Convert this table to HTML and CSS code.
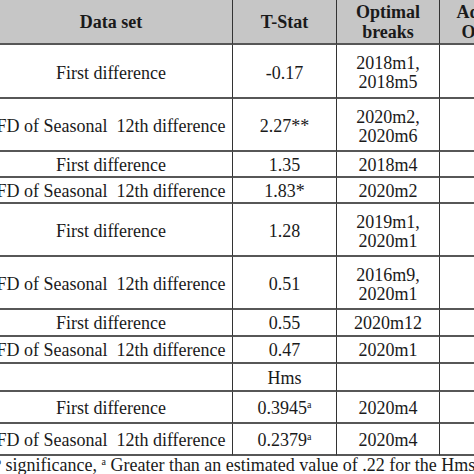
FILE: index.html
```html
<!DOCTYPE html>
<html>
<head>
<meta charset="utf-8">
<link rel="stylesheet" href="styles.css">
</head>
<body>
<div class="page">
  <table class="data">
    <thead>
      <tr class="hd">
        <th class="c1">Data set</th>
        <th class="c2">T-Stat</th>
        <th class="c3">Optimal<br>breaks</th>
        <th class="c4">Additive<br>Outlier</th>
      </tr>
    </thead>
    <tbody>
      <tr class="r54"><td>First difference</td><td>-0.17</td><td>2018m1,<br>2018m5</td><td></td></tr>
      <tr class="r53"><td>FD of Seasonal&nbsp; 12th difference</td><td>2.27**</td><td>2020m2,<br>2020m6</td><td></td></tr>
      <tr class="r26"><td>First difference</td><td>1.35</td><td>2018m4</td><td></td></tr>
      <tr class="r26"><td>FD of Seasonal&nbsp; 12th difference</td><td>1.83*</td><td>2020m2</td><td></td></tr>
      <tr class="r53"><td>First difference</td><td>1.28</td><td>2019m1,<br>2020m1</td><td></td></tr>
      <tr class="r53"><td>FD of Seasonal&nbsp; 12th difference</td><td>0.51</td><td>2016m9,<br>2020m1</td><td></td></tr>
      <tr class="r27"><td>First difference</td><td>0.55</td><td>2020m12</td><td></td></tr>
      <tr class="r27"><td>FD of Seasonal&nbsp; 12th difference</td><td>0.47</td><td>2020m1</td><td></td></tr>
      <tr class="r28"><td></td><td>Hms</td><td></td><td></td></tr>
      <tr class="r32"><td>First difference</td><td>0.3945<sup class="sup">a</sup></td><td>2020m4</td><td></td></tr>
      <tr class="r32"><td>FD of Seasonal&nbsp; 12th difference</td><td>0.2379<sup class="sup">a</sup></td><td>2020m4</td><td></td></tr>
    </tbody>
  </table>
  <p class="note"><sup class="sup">b</sup> significance, <sup class="sup">a</sup> Greater than an estimated value of .22 for the Hms statistic</p>
</div>
</body>
</html>
```
FILE: styles.css
```css
html, body {
  margin: 0;
  padding: 0;
  background: #ffffff;
}
.page {
  width: 474px;
  height: 474px;
  overflow: hidden;
  font-family: "Liberation Serif", "Times New Roman", serif;
  font-size: 18px;
  color: #1a1a1a;
}
.data {
  border-collapse: separate;
  border-spacing: 0;
  table-layout: fixed;
  width: 550px;
  margin-left: -10px;
}
.data th, .data td {
  box-sizing: border-box;
  text-align: center;
  vertical-align: middle;
  padding: 2px 2px 0;
  line-height: 19px;
  border-bottom: 2px solid #575757;
  border-right: 1px solid #333;
  white-space: nowrap;
}
.c1 { width: 243px; }
.c2 { width: 104px; }
.c3 { width: 103px; }
.c4 { width: 100px; }
.data th {
  background: #c6c6c6;
  font-weight: bold;
  line-height: 20px;
  padding-top: 0;
}
.hd th { height: 45px; }
.r54 td { height: 54px; padding-top: 4px; }
.r53 td { height: 53px; padding-top: 4px; }
.r26 td { height: 26px; }
.r27 td { height: 27px; }
.r28 td { height: 28px; }
.r32 td { height: 32px; }
.sup {
  font-size: 10px;
  vertical-align: top;
  line-height: 12px;
}
.note {
  margin: 0 0 0 -4px;
  white-space: nowrap;
  line-height: 19px;
}
```
